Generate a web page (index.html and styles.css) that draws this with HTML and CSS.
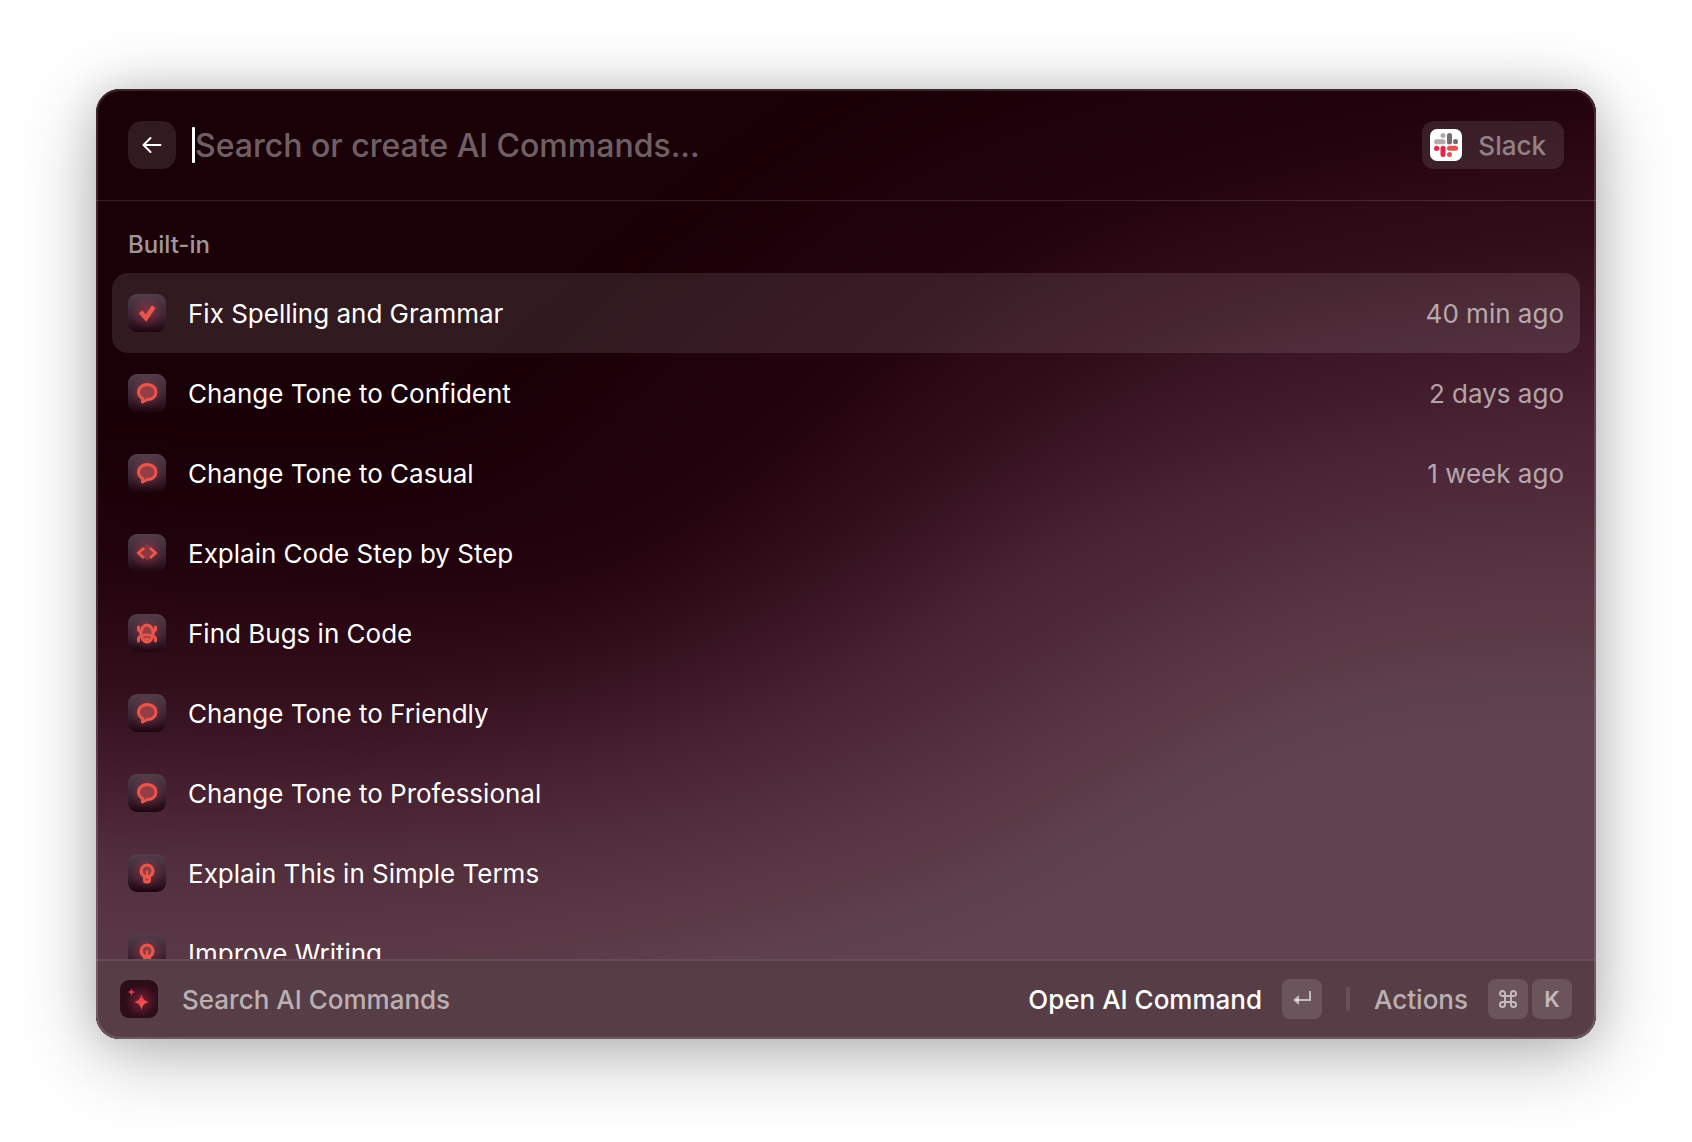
FILE: index.html
```
<!DOCTYPE html>
<html lang="en">

<head>
    <meta charset="UTF-8">
    <title>Search AI Commands</title>
    <meta name="viewport" content="width=device-width, initial-scale=1.0" />
    <link rel="stylesheet" href="styles.css">
</head>

<body>

    <!-- shared icons -->
    <svg class="sprite" aria-hidden="true">
        <defs>
            <linearGradient id="tile" x1="0" y1="0" x2="0" y2="1">
                <stop offset="0" stop-color="#523d48" />
                <stop offset="0.6" stop-color="#3a2230" />
                <stop offset="1" stop-color="#1f0510" />
            </linearGradient>
            <radialGradient id="glow">
                <stop offset="0" stop-color="#e0405a" stop-opacity="0.4" />
                <stop offset="1" stop-color="#e0405a" stop-opacity="0" />
            </radialGradient>
            <linearGradient id="spark" x1="0" y1="0" x2="0" y2="1">
                <stop offset="0" stop-color="#f0204c" />
                <stop offset="1" stop-color="#f0604c" />
            </linearGradient>
        </defs>
        <symbol id="icon-tile" viewBox="0 0 38 38">
            <rect width="38" height="38" rx="9" fill="url(#tile)" />
            <circle cx="19" cy="19" r="17" fill="url(#glow)" />
        </symbol>
        <symbol id="icon-check" viewBox="0 0 38 38">
            <path d="M14 19.500l4 4.500 6.500-9.500" fill="none" stroke="#e9564a" stroke-width="4.500" stroke-linecap="square" stroke-linejoin="miter" />
        </symbol>
        <symbol id="icon-bubble" viewBox="0 0 38 38">
            <path d="M19.500 10.500c5 0 8.500 3.200 8.500 7.500s-3.500 7.500-8.500 7.500l-5 2.500v-3.700c-2.500-1.300-4-3.500-4-6.300 0-4.300 4-7.500 9-7.500z" fill="#963c44" stroke="#e9564a" stroke-width="3" stroke-linejoin="round" />
        </symbol>
        <symbol id="icon-code" viewBox="0 0 38 38">
            <path d="M19 10l9 9-9 7-9-7z" fill="#8a3740" />
            <path d="M16 14l-5.500 5 5.500 5M22 14l5.500 5-5.500 5" fill="none" stroke="#e9564a" stroke-width="3" />
        </symbol>
        <symbol id="icon-bug" viewBox="0 0 38 38">
            <path d="M10.500 13v3l3 3M27.500 13v3l-3 3M10.500 27v-3l3-3M27.500 27v-3l-3-3" fill="none" stroke="#e9564a" stroke-width="3" stroke-linejoin="round" stroke-linecap="round" />
            <ellipse cx="19" cy="19.500" rx="6" ry="8.500" fill="#963c44" stroke="#e9564a" stroke-width="3" />
            <path d="M14 22c3-1.500 7-1.500 10 0M16.500 25h5" fill="none" stroke="#e9564a" stroke-width="2.500" />
        </symbol>
        <symbol id="icon-bulb" viewBox="0 0 38 38">
            <path d="M16.500 22.500c-2.300-1.300-3.500-3-3.500-5.500a6 6 0 0 1 12 0c0 2.500-1.200 4.200-3.500 5.500z" fill="#963c44" stroke="#e9564a" stroke-width="3" stroke-linejoin="round" />
            <path d="M19 16.500v7" stroke="#e9564a" stroke-width="2" />
            <path d="M15 22.500h8v4a3 3 0 0 1-3 3h-2a3 3 0 0 1-3-3z" fill="#e9564a" />
            <path d="M17.500 25.500h3" stroke="#963c44" stroke-width="1.500" />
        </symbol>
    </svg>

    <main class="window">

        <svg class="backdrop" viewBox="0 0 1500 950" preserveAspectRatio="none" aria-hidden="true">
            <defs>
                <filter id="soft" filterUnits="userSpaceOnUse" x="-200" y="-200" width="1900" height="1350" color-interpolation-filters="sRGB">
                    <feGaussianBlur stdDeviation="40" />
                </filter>
            </defs>
            <rect width="1500" height="950" fill="#1a0007" />
            <g filter="url(#soft)">
                <path fill="#21020d" d="M-200 390C200 430 360 450 480 330S720 100 860 40 1300-100 1700-140V1200H-200z" />
                <path fill="#2f0b17" d="M-200 510C100 510 420 570 580 470S800 280 930 200 1300 70 1700 20V1200H-200z" />
                <path fill="#3e1827" d="M-200 600C100 640 400 640 580 560S800 430 983 320 1300 210 1700 160V1200H-200z" />
                <path fill="#4d2737" d="M-200 680C100 720 420 700 620 630S840 490 1000 420 1300 310 1700 280V1200H-200z" />
                <path fill="#593643" d="M-200 760C100 790 460 790 680 720S920 600 1110 514 1350 440 1700 430V1200H-200z" />
                <path fill="#60434f" d="M-200 930C300 910 500 880 700 830S900 760 1091 656 1350 570 1700 560V1200H-200z" />
            </g>
        </svg>

        <header class="header">
            <button class="back" type="button" aria-label="Back">
                <svg width="20" height="20" viewBox="0 0 20 20" fill="none" stroke="currentColor" stroke-width="2" stroke-linecap="round" stroke-linejoin="round">
                    <path d="M18.500 10H1.500M8.500 3L1.500 10l7 7" />
                </svg>
            </button>
            <label class="search">
                <span class="caret"></span>
                <input class="search-input" type="text" placeholder="Search or create AI Commands..." aria-label="Search or create AI Commands">
            </label>
            <button class="app" type="button">
                <svg width="32" height="32" viewBox="0 0 32 32">
                    <rect width="32" height="32" rx="7" fill="#fff" />
                    <g stroke-width="5" stroke-linecap="round">
                        <path d="M19.500 6.500v6.500" stroke="#776a70" />
                        <path d="M25.500 12.600v.1" stroke="#776a70" />
                        <path d="M6.500 12.700H13" stroke="#b5a9ae" />
                        <path d="M13 6.500v.1" stroke="#b5a9ae" />
                        <path d="M13 19.300v6.200" stroke="#e92448" />
                        <path d="M6.600 19.300v.1" stroke="#e92448" />
                        <path d="M19.500 19.300h6" stroke="#e2544a" />
                        <path d="M19.500 25.400v.1" stroke="#e2544a" />
                    </g>
                </svg>
                Slack
            </button>
        </header>

        <section class="content">
            <h2 class="section-title">Built-in</h2>
            <ul class="list">
                <li>
                    <button class="item selected" type="button">
                        <svg class="icon"><use href="#icon-tile" /><use href="#icon-check" /></svg>
                        <span class="name">Fix Spelling and Grammar</span>
                        <span class="time">40 min ago</span>
                    </button>
                </li>
                <li>
                    <button class="item" type="button">
                        <svg class="icon"><use href="#icon-tile" /><use href="#icon-bubble" /></svg>
                        <span class="name">Change Tone to Confident</span>
                        <span class="time">2 days ago</span>
                    </button>
                </li>
                <li>
                    <button class="item" type="button">
                        <svg class="icon"><use href="#icon-tile" /><use href="#icon-bubble" /></svg>
                        <span class="name">Change Tone to Casual</span>
                        <span class="time">1 week ago</span>
                    </button>
                </li>
                <li>
                    <button class="item" type="button">
                        <svg class="icon"><use href="#icon-tile" /><use href="#icon-code" /></svg>
                        <span class="name">Explain Code Step by Step</span>
                    </button>
                </li>
                <li>
                    <button class="item" type="button">
                        <svg class="icon"><use href="#icon-tile" /><use href="#icon-bug" /></svg>
                        <span class="name">Find Bugs in Code</span>
                    </button>
                </li>
                <li>
                    <button class="item" type="button">
                        <svg class="icon"><use href="#icon-tile" /><use href="#icon-bubble" /></svg>
                        <span class="name">Change Tone to Friendly</span>
                    </button>
                </li>
                <li>
                    <button class="item" type="button">
                        <svg class="icon"><use href="#icon-tile" /><use href="#icon-bubble" /></svg>
                        <span class="name">Change Tone to Professional</span>
                    </button>
                </li>
                <li>
                    <button class="item" type="button">
                        <svg class="icon"><use href="#icon-tile" /><use href="#icon-bulb" /></svg>
                        <span class="name">Explain This in Simple Terms</span>
                    </button>
                </li>
                <li>
                    <button class="item" type="button">
                        <svg class="icon"><use href="#icon-tile" /><use href="#icon-bulb" /></svg>
                        <span class="name">Improve Writing</span>
                    </button>
                </li>
            </ul>
        </section>

        <footer class="footer">
            <svg class="icon" viewBox="0 0 38 38">
                <rect width="38" height="38" rx="9" fill="#2e0d1b" />
                <circle cx="21" cy="21" r="16" fill="url(#glow)" />
                <path d="M21.500 14c1 5 2.500 6.500 7.500 8-5 1.500-6.500 3-7.500 8-1-5-2.500-6.500-7.500-8 5-1.500 6.500-3 7.500-8zM11.500 8c.6 2.600 1.400 3.400 4 4-2.600.6-3.400 1.400-4 4-.6-2.600-1.400-3.400-4-4 2.600-.6 3.400-1.400 4-4z" fill="url(#spark)" />
            </svg>
            <span class="footer-title">Search AI Commands</span>
            <button class="action primary" type="button">
                Open AI Command
                <kbd class="key">
                    <svg width="20" height="20" viewBox="0 0 20 20" fill="none" stroke="currentColor" stroke-width="2">
                        <path d="M18 2v9H4" />
                        <path d="M7 6v10L1 11z" fill="currentColor" stroke="none" />
                    </svg>
                </kbd>
            </button>
            <span class="divider"></span>
            <button class="action" type="button">
                Actions
                <span class="keys">
                    <kbd class="key">
                        <svg width="20" height="20" viewBox="0 0 20 20" fill="none" stroke="currentColor" stroke-width="2">
                            <path d="M7 7h6v6H7zM7 7H4.500A2.500 2.500 0 1 1 7 4.500zM13 7V4.500A2.500 2.500 0 1 1 15.500 7zM13 13h2.500a2.500 2.500 0 1 1-2.500 2.500zM7 13v2.500A2.500 2.500 0 1 1 4.500 13z" />
                        </svg>
                    </kbd>
                    <kbd class="key">K</kbd>
                </span>
            </button>
        </footer>

    </main>

</body>

</html>
```
FILE: styles.css
```
* {
    box-sizing: border-box;
}

body {
    margin: 0;
    padding: 89px 96px 103px;
    height: 100vh;
    display: flex;
    font-family: 'Inter', sans-serif;
    font-size: 26px;
    background-color: white;
    color: white;
}

button {
    padding: 0;
    border: none;
    background: none;
    font: inherit;
    color: inherit;
    cursor: pointer;
}

.sprite {
    position: absolute;
    width: 0;
    height: 0;
}

.window {
    position: relative;
    flex: 1;
    min-width: 0;
    display: flex;
    flex-direction: column;
    overflow: hidden;
    border-radius: 24px;
    background-color: #1a0007;
    box-shadow: 0 0 40px rgba(0, 0, 0, 0.12), 0 16px 80px rgba(0, 0, 0, 0.28);
}

/* thin light rim over everything */
.window::after {
    content: "";
    position: absolute;
    inset: 0;
    border: 2px solid rgba(255, 255, 255, 0.15);
    border-radius: 24px;
    pointer-events: none;
}

.backdrop {
    position: absolute;
    inset: 0;
    width: 100%;
    height: 100%;
}

.header,
.content,
.footer {
    position: relative;
}

.header {
    display: flex;
    align-items: center;
    gap: 16px;
    padding: 32px 32px 31px;
    border-bottom: 1px solid rgba(255, 255, 255, 0.12);
}

.back {
    display: flex;
    align-items: center;
    justify-content: center;
    width: 48px;
    height: 48px;
    border-radius: 14px;
    background-color: rgba(255, 255, 255, 0.1);
}

.search {
    flex: 1;
    display: flex;
    align-items: center;
}

.caret {
    width: 3px;
    height: 36px;
    border-radius: 1px;
    background-color: white;
}

.search-input {
    flex: 1;
    min-width: 0;
    padding: 0;
    border: none;
    outline: none;
    background: none;
    font: inherit;
    font-size: 32px;
    font-weight: 500;
    color: white;
}

.search-input::placeholder {
    color: rgba(255, 255, 255, 0.4);
}

.app {
    display: flex;
    align-items: center;
    gap: 16px;
    height: 48px;
    padding: 0 18px 0 8px;
    border-radius: 12px;
    background-color: rgba(255, 255, 255, 0.1);
    font-weight: 500;
    color: rgba(255, 255, 255, 0.45);
}

.content {
    flex: 1;
    min-height: 0;
    overflow: hidden;
    padding: 28px 16px 0;
}

.section-title {
    margin: 0;
    padding: 0 16px 12px;
    font-size: 24px;
    line-height: 32px;
    font-weight: 500;
    color: rgba(255, 255, 255, 0.6);
}

.list {
    margin: 0;
    padding: 0;
    list-style: none;
}

.item {
    display: flex;
    align-items: center;
    width: 100%;
    height: 80px;
    padding: 0 16px;
    border-radius: 16px;
    text-align: left;
}

.selected {
    background-color: rgba(255, 255, 255, 0.1);
}

.icon {
    flex: none;
    width: 38px;
    height: 38px;
}

.name {
    flex: 1;
    padding-left: 22px;
}

.time {
    color: rgba(255, 255, 255, 0.6);
}

.footer {
    display: flex;
    align-items: center;
    height: 80px;
    padding: 0 24px 2px;
    border-top: 2px solid #664c57;
    background-color: #573d46;
    font-weight: 500;
}

.footer-title {
    flex: 1;
    padding-left: 24px;
    color: rgba(255, 255, 255, 0.6);
}

.action {
    display: flex;
    align-items: center;
    gap: 20px;
    font-weight: 500;
    color: rgba(255, 255, 255, 0.6);
}

.primary {
    color: white;
}

.divider {
    width: 4px;
    height: 24px;
    margin: 0 24px;
    border-radius: 2px;
    background-color: rgba(255, 255, 255, 0.1);
}

.keys {
    display: flex;
    gap: 4px;
}

.key {
    display: flex;
    align-items: center;
    justify-content: center;
    width: 40px;
    height: 40px;
    border-radius: 8px;
    background-color: rgba(255, 255, 255, 0.12);
    font-family: inherit;
    font-size: 22px;
    font-weight: 600;
    color: rgba(255, 255, 255, 0.6);
}
```
